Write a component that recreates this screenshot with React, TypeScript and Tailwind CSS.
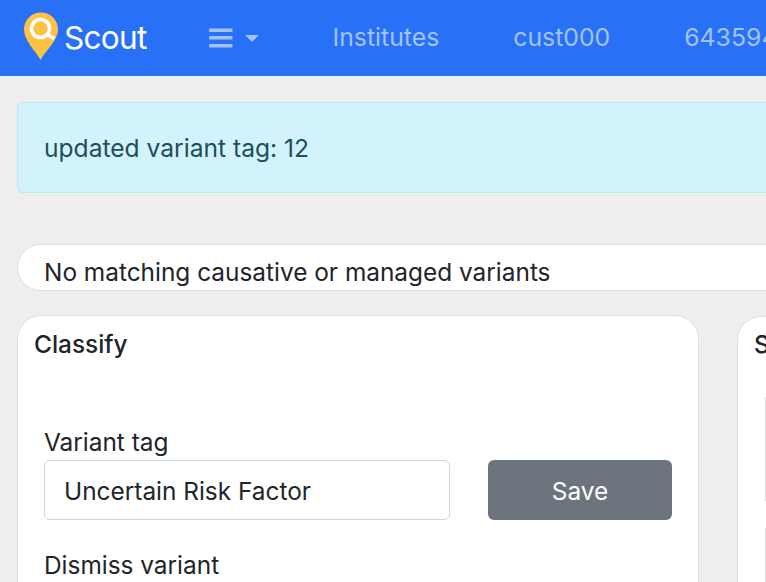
function Logo() {
  return (
    <svg width="36" height="50" viewBox="0 0 36 50" className="mb-[2px] shrink-0">
      <path d="M17.5 48 C13 39 1 29 1 17.5 C1 8 8.5 0.5 18 0.5 C27.5 0.5 35 8 35 17.5 C35 29 22 39 17.5 48 Z" fill="#fbc244" />
      <circle cx="17.5" cy="16.5" r="9" fill="none" stroke="#fff" strokeWidth="3.6" />
      <path d="M24 22.5 L31.5 26.5" stroke="#fff" strokeWidth="3.6" />
    </svg>
  );
}

function Hamburger() {
  return (
    <svg width="24" height="20" viewBox="0 0 24 20" fill="#a3c1fb" className="shrink-0">
      <rect y="0.5" width="23.5" height="3.5" rx="1" />
      <rect y="8" width="23.5" height="3.5" rx="1" />
      <rect y="16" width="23.5" height="3.5" rx="1" />
    </svg>
  );
}

function Navbar() {
  return (
    <nav className="flex h-[76px] w-[900px] items-center bg-[#2871f7] pl-[23px]">
      <Logo />
      <span className="ml-[5px] text-[31.5px] leading-none tracking-[-0.7px] text-white">Scout</span>
      <div className="ml-[62px] flex items-center">
        <Hamburger />
        <span className="ml-[12px] h-0 w-0 border-x-[7px] border-t-[7px] border-x-transparent border-t-[#a3c1fb]" />
      </div>
      <div className="ml-[74px] flex gap-[74px] text-[24.8px] text-[#a3c1fb]">
        <span>Institutes</span>
        <span>cust000</span>
        <span>6435948</span>
      </div>
    </nav>
  );
}

function ClassifyCard() {
  return (
    <div className="h-[400px] w-[682px] shrink-0 rounded-t-[24px] border border-[#dfdfdf] bg-white">
      <div className="px-4 pt-[9px] font-medium leading-[38px]">Classify</div>
      <div className="px-[26px] pt-[61px]">
        <div className="leading-[36px]">Variant tag</div>
        <div className="flex gap-[38px]">
          <div className="flex h-[60px] w-[406px] items-center rounded-[6px] border border-[#ced4da] px-[19px] pt-[3px]">Uncertain Risk Factor</div>
          <button className="h-[60px] w-[184px] rounded-[6px] bg-[#6c757d] pt-[3px] text-white">Save</button>
        </div>
        <div className="mt-[27px] leading-[36px]">Dismiss variant</div>
      </div>
    </div>
  );
}

function SideCard() {
  return (
    <div className="mt-px h-[400px] w-[300px] shrink-0 rounded-t-[24px] border border-[#dfdfdf] bg-white">
      <div className="px-4 pt-[8px] font-medium leading-[38px]">Summary</div>
      <div className="pl-[27px] pt-[34px]">
        <div className="h-[104px] border border-[#dfdfdf]">
          <div className="h-[52px] border-b border-[#dfdfdf]" />
        </div>
        <div className="mt-[27px] h-[104px] border border-[#dfdfdf]" />
      </div>
    </div>
  );
}

export default function App() {
  return (
    <div className="h-[582px] w-[766px] overflow-hidden bg-[#eeeeee] font-['Inter',sans-serif] text-[24.4px] text-[#212529]">
      <Navbar />
      <div className="w-[900px] pl-[17px] pt-[26px]">
        <div className="flex h-[91px] items-center rounded-[6px] border border-[#bee9f5] bg-[#d2f3fb] px-[26px] pt-[2px] text-[24.6px] text-[#1d4f5c]">
          updated variant tag: 12
        </div>
        <div className="mt-[51px] h-[47px] rounded-[24px] border border-[#dfdfdf] bg-white pl-[26px] leading-[54px]">
          No matching causative or managed variants
        </div>
        <div className="mt-[24px] flex gap-[38px]">
          <ClassifyCard />
          <SideCard />
        </div>
      </div>
    </div>
  );
}
